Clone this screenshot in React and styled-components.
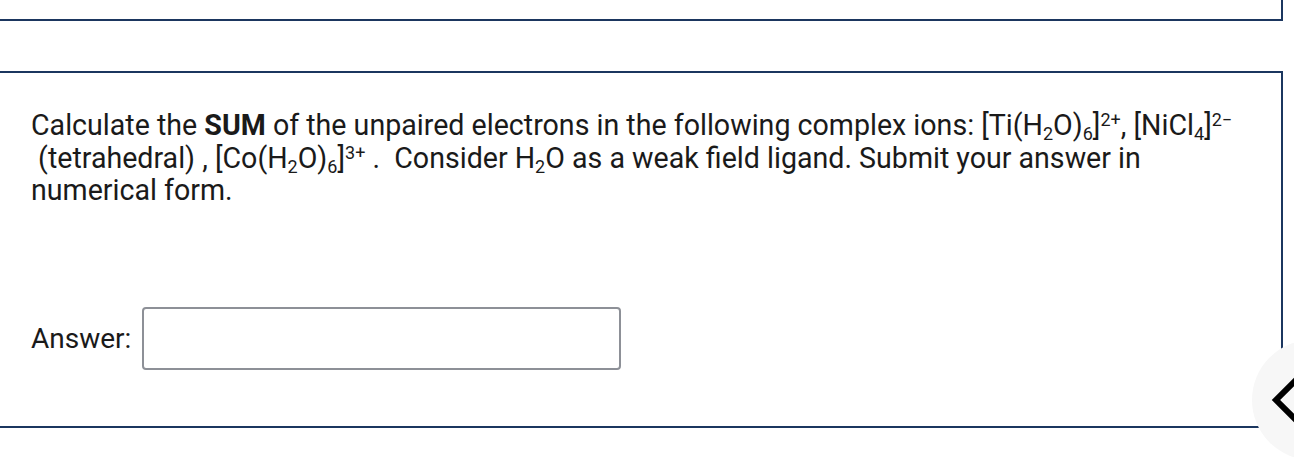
import styled, { createGlobalStyle } from 'styled-components'

const GlobalStyle = createGlobalStyle`
  body {
    margin: 0;
    background: #ffffff;
    font-family: Roboto, "Liberation Sans", sans-serif;
    color: #1a1a1a;
    overflow: hidden;
  }
`

function App() {
  return (
    <Page>
      <GlobalStyle />
      <TopPanel />
      <QuestionPanel>
        <Prompt>
          Calculate the <b>SUM</b> of the unpaired electrons in the following
          complex ions: [Ti(H<Sub>2</Sub>O)<Sub>6</Sub>]<Sup>2+</Sup>, [NiCl
          <Sub>4</Sub>]<Sup>2−</Sup>
          <br />
          &nbsp;(tetrahedral) , [Co(H<Sub>2</Sub>O)<Sub>6</Sub>]<Sup>3+</Sup> .
          &nbsp;Consider H<Sub>2</Sub>O as a weak field ligand. Submit your
          answer in
          <br />
          numerical form.
        </Prompt>
        <AnswerRow>
          <AnswerLabel htmlFor="answer">Answer:</AnswerLabel>
          <AnswerInput id="answer" type="text" />
        </AnswerRow>
      </QuestionPanel>
      <NavButton aria-label="previous">
        <svg width="40" height="60" viewBox="0 0 40 60">
          <polyline
            points="30,8 8,30 30,52"
            fill="none"
            stroke="#000"
            strokeWidth="6"
          />
        </svg>
      </NavButton>
    </Page>
  )
}

const Page = styled.div`
  position: relative;
  width: 1294px;
  height: 472px;
  overflow: hidden;
`

const TopPanel = styled.div`
  width: 1281px;
  height: 19px;
  border-right: 2px solid #1b365f;
  border-bottom: 2px solid #1b365f;
`

const QuestionPanel = styled.div`
  margin-top: 50px;
  width: 1283px;
  height: 357px;
  border-top: 2px solid #1b365f;
  border-right: 2px solid #1b365f;
  border-bottom: 2px solid #1b365f;
  padding: 36px 0 0 31px;
  box-sizing: border-box;
  display: flex;
  flex-direction: column;
`

const Prompt = styled.p`
  margin: 0;
  font-size: 28.6px;
  line-height: 32.5px;
  color: #1a1a1a;

  b {
    font-weight: 700;
  }
`

const Sub = styled.sub`
  font-size: 18px;
  line-height: 0;
  vertical-align: -5px;
`

const Sup = styled.sup`
  font-size: 18px;
  line-height: 0;
  vertical-align: 9px;
`

const AnswerRow = styled.div`
  display: flex;
  align-items: center;
  gap: 11px;
  margin-top: 100px;
`

const AnswerLabel = styled.label`
  font-size: 28px;
  color: #1a1a1a;
`

const AnswerInput = styled.input`
  width: 479px;
  height: 63px;
  box-sizing: border-box;
  border: 2px solid #8d9097;
  border-radius: 4px;
  background: #fff;
  font-size: 24px;
  font-family: inherit;
  padding: 0 10px;
  outline: none;
`

const NavButton = styled.button`
  position: absolute;
  left: 1252px;
  top: 340px;
  width: 120px;
  height: 120px;
  border-radius: 50%;
  border: none;
  background: #f7f7f7;
  padding: 0 0 0 16px;
  display: flex;
  align-items: center;
  justify-content: flex-start;
  cursor: pointer;
`

export default App
